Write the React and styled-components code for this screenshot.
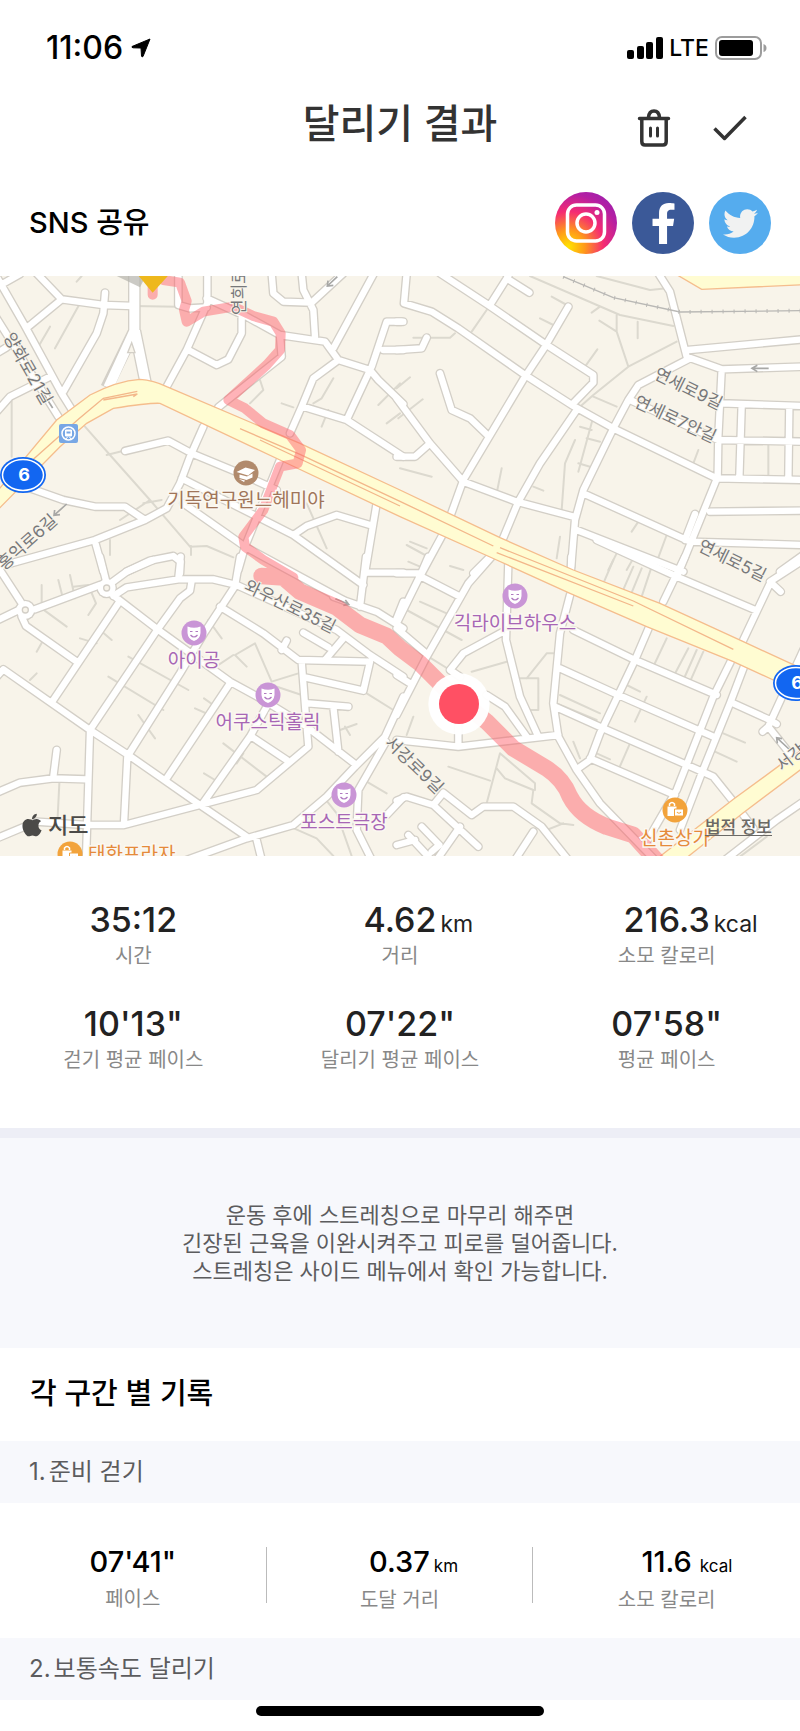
import React from 'react';
import styled, { createGlobalStyle } from 'styled-components';
import { FaApple, FaFacebookF, FaTwitter } from 'react-icons/fa';

const GlobalStyle = createGlobalStyle`
* {
  box-sizing: border-box;
}
body {
  margin: 0;
  background-color: white;
  font-family: Inter, "Noto Sans CJK KR", sans-serif;
  color: #222;
}
`

const Screen = styled.div`
display: flex;
flex-direction: column;
width: 100%;
`
const StatusBar = styled.div`
display: flex;
justify-content: space-between;
align-items: center;
height: 88px;
padding: 8px 33px 0 46px;
color: black;
`
const StatusGroup = styled.div`
display: flex;
align-items: center;
gap: ${props => props.$gap}px;
`
const Clock = styled.span`
font-size: 32px;
line-height: 36px;
font-weight: 500;
`
const Network = styled.span`
font-size: 23px;
line-height: 28px;
font-weight: 500;
`

const Header = styled.header`
display: grid;
grid-template-columns: 1fr auto 1fr;
align-items: center;
height: 80px;
padding: 0 48px;
color: #333;
`
const Title = styled.h1`
grid-column: 2;
margin: 0;
padding-bottom: 8px;
font-size: 40px;
line-height: 48px;
font-weight: 500;
`
const HeaderActions = styled.div`
display: flex;
justify-content: flex-end;
gap: 32px;
`
const IconButton = styled.button`
display: flex;
align-items: center;
justify-content: center;
width: 44px;
height: 44px;
padding: 0;
border: none;
background: none;
color: inherit;
cursor: pointer;
`

const ShareRow = styled.section`
display: flex;
align-items: center;
justify-content: space-between;
height: 108px;
padding: 2px 29px 0;
color: black;
`
const ShareTitle = styled.h2`
margin: 0;
font-size: 29px;
line-height: 36px;
font-weight: 500;
`
const ShareButtons = styled.div`
display: flex;
gap: 15px;
`
const ShareButton = styled.button`
display: flex;
align-items: center;
justify-content: center;
width: 62px;
height: 62px;
padding: 0;
border: none;
border-radius: 50%;
background: ${props => props.$background};
color: ${props => props.$color || 'white'};
cursor: pointer;
`

const MapWrapper = styled.section`
position: relative;
overflow: hidden;
background-color: #f8f4ea;
`
const MapDrawing = styled.svg`
display: block;
width: 100%;
height: auto;
`
const MapBrand = styled.div`
display: flex;
align-items: center;
gap: 3px;
position: absolute;
left: 19px;
bottom: 17px;
color: #4b4a48;
font-size: 22px;
line-height: 28px;
font-weight: 500;
`
const LegalLink = styled.a`
position: absolute;
right: 28px;
bottom: 17px;
color: #6b6965;
font-size: 17px;
line-height: 24px;
font-weight: 500;
text-decoration: underline;
text-underline-offset: 2px;
`
const RoadLabel = styled.text`
fill: #77787a;
stroke: #f8f4ea;
stroke-width: 2px;
paint-order: stroke;
font-size: 17px;
`
const PlaceLabel = styled.text`
fill: ${props => props.$color};
stroke: #fbf8f1;
stroke-width: 3px;
paint-order: stroke;
text-anchor: ${props => props.$anchor || 'middle'};
font-size: 19px;
`
const ShieldLabel = styled.text`
fill: white;
text-anchor: middle;
font-size: 18px;
font-weight: 700;
`

const Summary = styled.section`
display: grid;
grid-template-columns: repeat(3, 1fr);
row-gap: 32px;
padding: 44px 0 52px;
`
const Stat = styled.div`
display: flex;
flex-direction: column;
align-items: stretch;
text-align: center;
`
const StatValue = styled.div`
display: grid;
grid-template-columns: 1fr auto 1fr;
align-items: baseline;
font-size: 34px;
line-height: 40px;
font-weight: 500;
`
const StatNumber = styled.span`
grid-column: 2;
`
const StatUnit = styled.span`
padding-left: 4px;
text-align: left;
font-size: 23px;
line-height: 24px;
font-weight: 400;
`
const StatLabel = styled.div`
color: #888;
font-size: 20px;
line-height: 32px;
font-weight: 400;
`

const Notice = styled.p`
display: flex;
flex-direction: column;
justify-content: center;
height: 220px;
margin: 0;
border-top: 10px solid #edeef6;
background-color: #f7f8fc;
color: #5c5c5e;
text-align: center;
font-size: 22px;
line-height: 28px;
`

const RecordsTitle = styled.h2`
margin: 0;
padding: 28px 30px 29px;
color: black;
font-size: 29px;
line-height: 36px;
font-weight: 500;
`
const LapTitle = styled.h3`
display: flex;
gap: 3px;
margin: 0;
padding: 15px 29px;
background-color: #f7f8fc;
color: #5c5c5e;
font-size: 24px;
line-height: 32px;
font-weight: 400;
`
const LapRow = styled.div`
display: grid;
grid-template-columns: repeat(3, 1fr);
padding: 44px 0 35px;
`
const LapStat = styled(Stat)`
height: 56px;
border-right: ${props => props.$divided ? '1px solid #bbb' : 'none'};
`
const LapValue = styled(StatValue)`
color: black;
font-size: 29px;
line-height: 30px;
`
const LapUnit = styled(StatUnit)`
padding-left: ${props => props.$wide ? 8 : 4}px;
font-size: 17px;
`
const LapLabel = styled(StatLabel)`
padding-top: 6px;
`
const HomeIndicator = styled.div`
align-self: center;
width: 36%;
height: 10px;
margin: 6px 0 15px;
border-radius: 5px;
background-color: black;
`

// every tile keeps its own coordinates, x / y is where it sits on the canvas
const TILES = [
  {
    x: 0,
    y: -18,
    roads: [
      'M-10 20L75 168L185 370L215 418', 'M-10 52L60 12', 'M110 10L185 88L85 170', 'M185 88L310 105L400 108',
      'M-10 250L20 232', 'M315 68L310 130L290 190L190 365', 'M622 10V100L560 240L500 350',
      'M565 240L650 285L685 268L725 190V140', 'M535 10V105L570 115L620 112', 'M620 85L740 140L840 195L975 215L1015 270L940 325L905 410L870 490',
      'M1015 270L1110 300L1135 330L1210 402', 'M815 10L820 70L850 95L935 98L1030 10', 'M905 10L910 60L940 120L945 200',
      'M1122 10L1000 235', 'M910 410L1040 450L1210 560', 'M1110 300L1040 450', 'M1115 290L1160 155H1210', 'M1150 240H1210',
      'M840 195L845 260L655 412', 'M610 470L570 560L540 640L500 715L435 750', 'M375 543L505 512L575 550L720 610L830 660',
      'M90 655L190 690L285 710H375L435 750', 'M435 750L285 810L-10 892', 'M545 625L880 795L920 768L1010 735L1110 765',
      'M550 700L735 830', 'M1130 700L1095 910', 'M880 795L1090 945', 'M840 570L735 830L715 900', 'M735 830L1030 990',
      'M285 815L310 905', 'M380 905L450 872L520 858L542 875L540 910', 'M-10 425L30 380L150 320', 'M-10 145L175 440',
    ],
    lanes: [
      'M245 18L230 35', 'M240 100L165 235', 'M150 170L118 225', 'M35 385V560', 'M255 470L330 555L450 690L570 830',
      'M320 555L380 540', 'M780 330L790 360L750 400', 'M845 400L880 412', 'M1000 325L965 385L940 400', 'M985 420L965 470', 'M1200 340L1135 405',
      'M450 690L360 750', 'M570 830L620 828L700 862', 'M920 700L980 835', 'M330 810V855', 'M400 108L620 112', 'M485 690L430 700', 'M1200 430L1160 460', 'M573 828V855',
    ],
  },
  {
    x: 1200,
    y: -18,
    roads: [
      'M20 10L12 100L95 125L175 175L375 315L520 408L640 475L950 625L1210 630', 'M120 10L265 105L440 225L580 315V338L515 405',
      'M325 18L270 105', 'M320 25L388 68', 'M505 110L435 230L375 320L190 630L145 755', 'M-10 240L65 235L80 203', 'M-10 155H4',
      'M120 310L155 420L210 445L262 495', 'M-10 385L90 520L190 635L350 695L520 740', 'M-10 560L45 560L90 520',
      'M530 420L420 580L355 695L305 815', 'M870 265L715 345L685 390L640 475L550 660L525 750L512 910',
      'M775 10L810 65L860 260L965 298L1210 290', 'M865 240L1210 208', 'M965 298L955 500L953 620L835 910', 'M965 400L1210 408',
      'M690 390L955 510L1210 515', 'M1025 405L1018 625', 'M1168 408L1165 628', 'M930 725L1210 722', 'M885 732L855 810',
      'M550 670L870 815L1210 825', 'M530 780L850 905', 'M1140 905L1210 855', 'M130 790L65 910', 'M270 860L220 910',
    ],
    lanes: [
      'M390 18L660 135L820 168', 'M590 18L750 60L800 55', 'M260 120L215 185', 'M40 203H150L165 190', 'M650 135L650 185L685 290',
      'M830 215L685 290L580 375L540 410', 'M455 80L495 102', 'M600 110L575 128', 'M598 152L650 185', 'M713 155V205', 'M592 238L555 290',
      'M420 145L460 165', 'M580 380L650 410', 'M580 440L535 605', 'M540 470L575 480', 'M525 510L495 580L485 720', 'M560 505L600 515',
      'M305 595L292 660', 'M400 650L430 662', 'M895 540L880 580', 'M1105 525V620', 'M30 322L-10 355', 'M68 388L-5 445', 'M0 595L95 620',
      'M715 755L695 785', 'M480 800L470 865', 'M800 795L765 890', 'M650 850L625 900', 'M30 815L80 835', 'M20 825L75 855', 'M25 875L60 890', 'M150 888L190 900', 'M535 580L570 590', 'M700 865L680 900',
    ],
  },
  {
    x: 0,
    y: 852,
    roads: [
      'M-10 15L62 125', 'M-10 182L60 148', 'M105 148L300 75', 'M300 -10L318 62', 'M65 170L78 198L230 305', 'M335 68L380 35L460 0',
      'M340 108L380 82L535 58L640 58L710 75L1010 210L1110 285L1210 350', 'M542 -10L535 55', 'M575 62L570 92L540 115L475 205L270 510',
      'M355 130L160 420', 'M345 110L475 210L690 365L790 420L920 500L1065 612', 'M720 -10L705 78L615 215L540 340L385 585',
      'M690 370L500 655', 'M800 440L750 530L610 728', 'M-10 350L10 328L270 510L385 585L600 735L740 830', 'M270 510L258 900',
      'M382 590L372 790', 'M260 795H372L600 735L770 690L925 560L920 500L905 305', 'M170 570L160 650', 'M-10 698L60 668L160 655L258 658',
      'M-10 835L110 785L260 795', 'M755 530L860 600', 'M660 140L790 220L895 300L1110 305L1090 392L915 352', 'M925 430L1045 440',
      'M1000 440L1015 575', 'M860 242L845 270', 'M910 218L985 262', 'M1030 235L975 300', 'M1210 410L1155 530L1065 620L980 710L880 795L740 835L560 900',
      'M1158 545L1075 690L1070 810L1115 900', 'M1210 712L1160 765', 'M770 840L785 900', 'M1098 -10L1080 140', 'M1095 38H1210',
      'M1000 110L1130 155L1210 205', 'M1210 125L1190 175',
    ],
    lanes: [
      'M125 75V145L200 200', 'M210 45L225 115', 'M175 60L190 120', 'M220 80L265 75L288 130L265 165', 'M240 235L290 250', 'M300 210L335 240',
      'M130 240L110 275', 'M110 340L90 360', 'M385 290L565 390', 'M325 350L490 450', 'M415 465L465 535', 'M612 415L640 435', 'M585 445L630 465',
      'M625 180L665 235', 'M740 320L705 285L765 250L815 365L895 340', 'M815 375L905 405', 'M670 550L800 650', 'M710 610L730 580', 'M612 640L645 660',
      'M1020 510L1070 492', 'M1035 500L1050 525', 'M1100 400L1180 450', 'M1100 665L1160 700', 'M178 670L172 790', 'M870 800L950 835L1000 888',
      'M970 710L1010 760L1055 888', 'M640 325L700 285',
    ],
  },
  {
    x: 1200,
    y: 852,
    roads: [
      'M85 -10L60 48L-10 190', 'M60 48L180 110', 'M-10 40H60', 'M275 -10L205 70L80 290L-10 465', 'M-10 205L80 282', 'M-10 345L30 370',
      'M325 10L318 240L360 410L415 530', 'M315 212L190 280L150 330L180 350', 'M514 -10L513 20', 'M510 105L480 220L460 430L475 530L530 630L600 730L765 900',
      'M-10 540L175 560L475 525', 'M175 500V555', 'M260 405L315 440L380 530', 'M590 -60L830 50L1070 152', 'M855 -10L790 125',
      'M1110 70L1025 250', 'M1210 0L1110 65L1142 95', 'M520 210L705 300L950 405', 'M480 325L655 405L940 530', 'M465 440L610 505L850 610L940 650L1000 725L1060 805',
      'M570 595L825 705', 'M750 195L705 300L600 520L570 600L530 628', 'M992 305L940 410L830 690L740 845', 'M1032 320L990 430L905 640L840 810',
      'M1000 430L1110 480L1130 492', 'M1210 270L1105 500L1088 515', 'M1105 500L1185 600', 'M-10 722L20 710L100 735L235 860',
      'M100 735L130 698L215 765L250 740H340L425 800L505 900', 'M400 815L345 900', 'M65 800L118 855L95 875', 'M25 825L90 895', 'M-10 855L45 840',
      'M1210 725L1130 780L975 900', 'M180 800L110 900',
    ],
    lanes: [
      'M20 150L185 240', 'M85 290L150 330', 'M60 125L140 160', 'M215 335L320 305', 'M460 280H440L380 355', 'M355 355H415V450H375',
      'M480 405L600 460', 'M470 430L590 480', 'M680 375L720 395', 'M740 410L705 485', 'M640 0L610 70', 'M700 20L665 100', 'M725 25L690 110',
      'M755 20L725 110', 'M800 235L755 330', 'M865 265L820 350', 'M890 270L850 360', 'M910 275L870 365', 'M970 520L1035 548', 'M945 575L1010 605',
      'M590 580L630 598', 'M520 545L540 595', 'M690 550L655 630', 'M40 470L20 525', 'M145 620L270 662', 'M300 580L260 730', 'M290 625L315 655L400 690L395 730L480 790L520 795',
      'M300 580L405 670V690', 'M440 810L490 790', 'M1020 890L1100 830',
    ],
  },
]

const MINOR_PLACES = [
  { x: 194, y: 357, label: '아이공' },
  { x: 268, y: 419, label: '어쿠스틱홀릭' },
  { x: 344, y: 519, label: '포스트극장' },
  { x: 515, y: 320, label: '긱라이브하우스' },
]

const ROAD_LABELS = [
  { x: 3, y: 61, angle: 60, label: '양화로21길' },
  { x: 4, y: 295, angle: -42, label: '홍익로6길' },
  { x: 245, y: 39, angle: -90, label: '연희로' },
  { x: 243, y: 314, angle: 26, label: '와우산로35길' },
  { x: 653, y: 102, angle: 26, label: '연세로9길' },
  { x: 633, y: 130, angle: 25, label: '연세로7안길' },
  { x: 697, y: 274, angle: 26, label: '연세로5길' },
  { x: 384, y: 468, angle: 44, label: '서강로9길' },
  { x: 782, y: 496, angle: -38, label: '서강로' },
]

const SUMMARY = [
  { label: '시간', value: '35:12' },
  { label: '거리', value: '4.62', unit: 'km' },
  { label: '소모 칼로리', value: '216.3', unit: 'kcal' },
  { label: '걷기 평균 페이스', value: '10\'13"' },
  { label: '달리기 평균 페이스', value: '07\'22"' },
  { label: '평균 페이스', value: '07\'58"' },
]

const LAP_STATS = [
  { label: '페이스', value: '07\'41"' },
  { label: '도달 거리', value: '0.37', unit: 'km' },
  { label: '소모 칼로리', value: '11.6', unit: 'kcal', wide: true },
]

function TheaterPin({ x, y }) {
  return (
    <g transform={`translate(${x} ${y})`}>
      <circle r="12.5" fill="#c995d6" />
      <path d="M-6.500 -6.500Q0 -4 6.500 -6.500V0Q6 6 0 8Q-6 6 -6.500 0Z" fill="white" />
      <path d="M-4 -1.500h2.500M1.500 -1.500H4M-3.500 2Q0 6 3.500 2" fill="none" stroke="#b07ac0" strokeWidth="1.2" />
    </g>
  );
}

function ShopPin({ x, y }) {
  return (
    <g transform={`translate(${x} ${y})`}>
      <circle r="12.5" fill="#f2a33c" />
      <path d="M-7.500 -3.500h9V6h-9Z" fill="white" />
      <path d="M-5.500 -4v-2q2.500 -3 5 0v2" fill="none" stroke="white" strokeWidth="1.5" />
      <path d="M-0.500 -1H8.500V6H-0.500Z" fill="white" stroke="#f2a33c" strokeWidth="1" />
      <path d="M2 2q2 2.500 4 0" fill="none" stroke="#f2a33c" strokeWidth="1.2" />
    </g>
  );
}

function RouteShield({ x, y }) {
  return (
    <g>
      <ellipse cx={x} cy={y} rx="23" ry="18" fill="#1266f1" />
      <ellipse cx={x} cy={y} rx="20.500" ry="15.500" fill="none" stroke="white" strokeWidth="1.5" />
      <ShieldLabel x={x + 1} y={y + 6}>6</ShieldLabel>
    </g>
  );
}

function Streets() {
  const layer = (kind, stroke, width) => (
    <g fill="none" stroke={stroke} strokeWidth={width} strokeLinecap="round" strokeLinejoin="round">
      {TILES.map((tile) => (
        <path key={`${tile.x}${tile.y}`} transform={`translate(${tile.x} ${tile.y})`} d={tile[kind].join('')} />
      ))}
    </g>
  )
  return (
    <svg viewBox="0 0 2400 1740" width="800" height="580">
      {layer('lanes', '#dcd9cf', 6)}
      {layer('roads', '#d3cfc7', 27)}
      <path d="M403 -10V165L320 335M405 165L440 335" fill="none" stroke="#d3cfc7" strokeWidth="38" />
      <g fill="#d3cfc7">
        <circle cx="76" cy="1002" r="31" />
        <circle cx="320" cy="936" r="31" />
      </g>
      {layer('roads', 'white', 19)}
      <path d="M403 -10V165L325 335M405 165L440 335" fill="none" stroke="white" strokeWidth="30" />
      <path d="M395 200L383 230H405Z" fill="#f8f4ea" stroke="#d3cfc7" strokeWidth="4" />
      <g fill="white">
        <circle cx="76" cy="1002" r="27" />
        <circle cx="320" cy="936" r="27" />
      </g>
      <g fill="#f8f4ea" stroke="#d3cfc7" strokeWidth="4">
        <circle cx="76" cy="1002" r="9" />
        <circle cx="320" cy="936" r="9" />
      </g>

      {/* railway */}
      <path d="M1690 2L1840 65L2040 108L2400 104" fill="none" stroke="#b9b8b5" strokeWidth="4" />
      <path d="M1690 2L1840 65L2040 108L2400 104" fill="none" stroke="#b9b8b5" strokeWidth="12" strokeDasharray="3 30" />

      {/* highways */}
      <g fill="#fffcd2" stroke="#f5bd8d" strokeWidth="4">
        <path d="M2030 -4L2105 40L2410 26V-10Z" />
        <path d="M2410 1418L2350 1460L2200 1570L1975 1745H2060L2230 1610L2410 1475Z" />
        <path d="M-10 648L170 432L270 357Q350 315 420 310Q460 312 500 332L900 502L1200 642L1500 785L1720 882L1980 982L2230 1097L2410 1180V1250L2320 1212L2200 1157L1940 1052L1710 952L1490 852L1200 722L840 552L480 382Q450 380 340 397L260 442L180 512L-10 705Z" />
      </g>
      <g fill="none" stroke="#f3b78a" strokeWidth="4">
        <path d="M100 550L235 430L310 367L412 346M310 372L412 354L400 362" />
        <path d="M720 458L900 535L1200 676L1480 810M780 492L920 558L1200 690M1500 815L1900 975L2200 1120M1490 830L1900 990" />
      </g>

      {/* direction arrows */}
      <g fill="none" stroke="#a8a8a6" strokeWidth="5">
        <path d="M2306 277H2256M2272 268L2256 277L2272 287" />
        <path d="M1012 2L982 30M984 14L982 30L1000 28" />
        <path d="M200 684L162 718M164 702L162 718L180 716" />
        <path d="M1006 968L1046 985M1036 972L1046 985L1030 988" />
        <path d="M2370 1422L2330 1385M2332 1402L2330 1385L2346 1388" />
        <path d="M130 352L158 396" />
      </g>

      {/* start pin */}
      <path d="M340 -5L420 34L440 -5Z" fill="#b5b3ac" opacity=".7" />
      <g fill="none" stroke="#ff5e68" strokeLinecap="round" strokeLinejoin="round" opacity=".47">
        <path d="M458 20V56M490 12L540 20L560 75L552 102L560 137L610 107L700 92L760 120L820 137L842 172L840 222L800 267L685 372L735 397L790 442L870 477L903 522L893 562L840 572L790 702L730 782L735 812L790 852L880 905" strokeWidth="30" />
        <path d="M785 900L850 904L900 947L1010 994L1080 1047L1160 1080L1200 1117L1260 1162L1330 1232L1460 1337L1540 1417L1640 1477Q1690 1510 1710 1562Q1740 1620 1820 1652L1900 1677L1975 1760" strokeWidth="50" />
      </g>
      <path d="M412 -5H508L458 50Z" fill="#eeb81c" />

      {/* current position */}
      <circle cx="1377" cy="1284" r="92" fill="white" opacity=".96" />
      <circle cx="1377" cy="1284" r="60" fill="#ff5064" />
    </svg>
  );
}

function RouteMap() {
  return (
    <MapWrapper aria-label="달린 경로">
      <MapDrawing viewBox="0 0 800 580">
        <Streets />
        {ROAD_LABELS.map((item) => (
          <RoadLabel key={item.label} transform={`translate(${item.x} ${item.y}) rotate(${item.angle})`}>{item.label}</RoadLabel>
        ))}

        <rect x="59" y="148" width="19" height="19" rx="2" fill="#78a7e5" />
        <circle cx="68.500" cy="157.500" r="6.500" fill="none" stroke="white" strokeWidth="1.5" />
        <path d="M65.500 154h6v6h-6ZM66 163l1.500 -2M71 163l-1.500 -2" fill="white" stroke="white" strokeWidth="1" />
        <path d="M66.500 155.500h4v2h-4Z" fill="#78a7e5" />
        <RouteShield x={23} y={199} />
        <RouteShield x={796} y={407} />

        <circle cx="246" cy="197" r="12.5" fill="#b18a6c" />
        <path d="M236.500 196l9 -4.500 9.500 2.500 -7 5.500ZM239.500 198.500l7.500 2 5.500 -3v4l-6 2.500 -7 -2ZM239 203l6 1.500 -1 1.500Z" fill="white" />
        <PlaceLabel x={246} y={231} $color="#a0755a">기독연구원느헤미야</PlaceLabel>
        {MINOR_PLACES.map((place) => (
          <g key={place.label}>
            <TheaterPin x={place.x} y={place.y} />
            <PlaceLabel x={place.x} y={place.y + 34} $color="#a766b5">{place.label}</PlaceLabel>
          </g>
        ))}
        <ShopPin x={675} y={534} />
        <PlaceLabel x={675} y={569} $color="#e58a3a">신촌상가</PlaceLabel>
        <ShopPin x={70} y={578} />
        <PlaceLabel x={88} y={585} $color="#e58a3a" $anchor="start">태화프라자</PlaceLabel>
      </MapDrawing>
      <MapBrand><FaApple size={26} />지도</MapBrand>
      <LegalLink href="#legal">법적 정보</LegalLink>
    </MapWrapper>
  );
}

function InstagramIcon() {
  return (
    <svg width="62" height="62" viewBox="0 0 62 62" fill="none" stroke="white" strokeWidth="3.5">
      <rect x="12.500" y="13" width="37" height="36" rx="9" />
      <circle cx="31" cy="31" r="9" />
      <circle cx="42" cy="20.500" r="2.500" fill="white" stroke="none" />
    </svg>
  );
}

function App() {
  return (
    <Screen>
      <GlobalStyle />
      <StatusBar>
        <StatusGroup $gap={8}>
          <Clock>11:06</Clock>
          <svg width="20" height="20" viewBox="0 0 20 20">
            <path d="M19 1L1 8.500Q0.500 9.500 2 9.800L10 10L10.500 18Q11 19.500 12 18.500Z" stroke="black" strokeLinejoin="round" />
          </svg>
        </StatusGroup>
        <StatusGroup $gap={6}>
          <svg width="36" height="22" viewBox="0 0 36 22">
            <rect x="0" y="13" width="7" height="9" rx="2" />
            <rect x="10" y="9" width="7" height="13" rx="2" />
            <rect x="19" y="5" width="7" height="17" rx="2" />
            <rect x="29" y="0" width="7" height="22" rx="2" />
          </svg>
          <Network>LTE</Network>
          <svg width="52" height="24" viewBox="0 0 52 24">
            <rect x="1" y="1" width="45" height="22" rx="6" fill="none" stroke="#9c9c9c" strokeWidth="2" />
            <rect x="4" y="4" width="34" height="16" rx="3" />
            <path d="M48.500 8Q51.500 9 51.500 12T48.500 16Z" fill="#9c9c9c" />
          </svg>
        </StatusGroup>
      </StatusBar>

      <Header>
        <Title>달리기 결과</Title>
        <HeaderActions>
          <IconButton aria-label="삭제">
            <svg width="34" height="38" viewBox="0 0 34 38" fill="none" stroke="currentColor" strokeWidth="3.5" strokeLinecap="round" strokeLinejoin="round">
              <path d="M2.500 9.500H31.500M4.800 9.500V32.500Q4.800 36 8 36H26Q29.200 36 29.200 32.500V9.500" />
              <path d="M11.500 8.500Q12 2 17 2T22.500 8.500" />
              <path d="M13.500 19V27M20.500 19V27" strokeWidth="3" />
            </svg>
          </IconButton>
          <IconButton aria-label="완료">
            <svg width="34" height="26" viewBox="0 0 34 26" fill="none" stroke="currentColor" strokeWidth="3.5" strokeLinejoin="round">
              <path d="M1.500 13.500L11.500 23.500L32.500 2" />
            </svg>
          </IconButton>
        </HeaderActions>
      </Header>

      <ShareRow>
        <ShareTitle>SNS 공유</ShareTitle>
        <ShareButtons>
          <ShareButton
            aria-label="Instagram"
            $background="radial-gradient(circle at 22% 88%, #ffe300 0%, #ff9a1a 22%, #f52b72 48%, #b51fa2 72%, #8a22b8 100%)"
          >
            <InstagramIcon />
          </ShareButton>
          <ShareButton aria-label="Facebook" $background="#3b5998"><FaFacebookF size={41} /></ShareButton>
          <ShareButton aria-label="Twitter" $background="#55acee" $color="#f1f2f2"><FaTwitter size={35} /></ShareButton>
        </ShareButtons>
      </ShareRow>

      <RouteMap />

      <Summary>
        {SUMMARY.map((item) => (
          <Stat key={item.label}>
            <StatValue>
              <StatNumber>{item.value}</StatNumber>
              {item.unit && <StatUnit>{item.unit}</StatUnit>}
            </StatValue>
            <StatLabel>{item.label}</StatLabel>
          </Stat>
        ))}
      </Summary>

      <Notice>
        <span>운동 후에 스트레칭으로 마무리 해주면</span>
        <span>긴장된 근육을 이완시켜주고 피로를 덜어줍니다.</span>
        <span>스트레칭은 사이드 메뉴에서 확인 가능합니다.</span>
      </Notice>

      <RecordsTitle>각 구간 별 기록</RecordsTitle>
      <LapTitle><span>1.</span><span>준비 걷기</span></LapTitle>
      <LapRow>
        {LAP_STATS.map((item, index) => (
          <LapStat key={item.label} $divided={index < 2}>
            <LapValue>
              <StatNumber>{item.value}</StatNumber>
              {item.unit && <LapUnit $wide={item.wide}>{item.unit}</LapUnit>}
            </LapValue>
            <LapLabel>{item.label}</LapLabel>
          </LapStat>
        ))}
      </LapRow>
      <LapTitle><span>2.</span><span>보통속도 달리기</span></LapTitle>
      <HomeIndicator />
    </Screen>
  );
}

export default App;
